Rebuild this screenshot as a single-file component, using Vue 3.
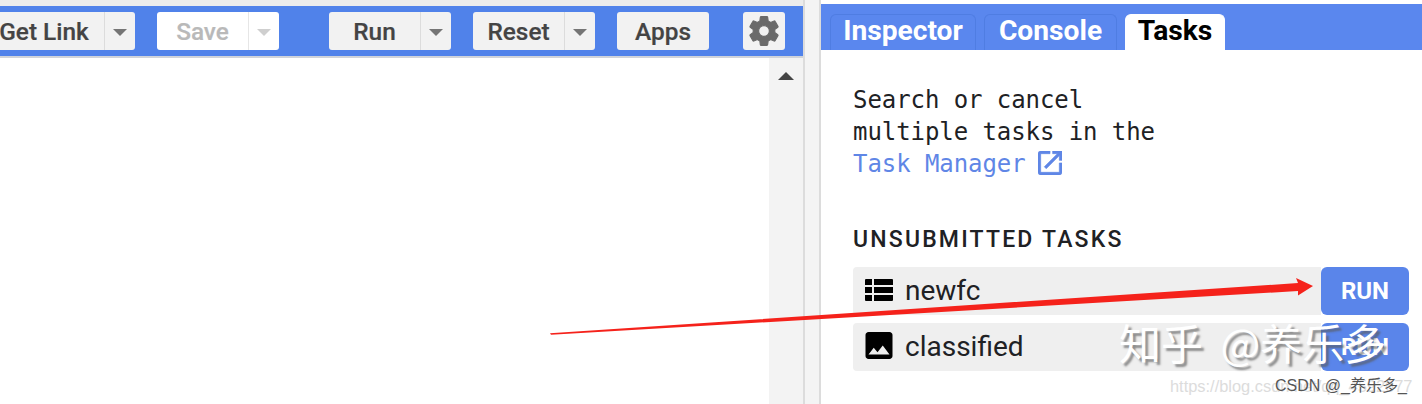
<template>
  <div class="page">
    <section class="editor">
      <div class="top-strip"></div>
      <div class="toolbar">
        <div class="split" v-for="b in buttons" :key="b.label" :class="b.cls">
          <button class="main" :style="{ width: b.w + 'px' }">{{ b.label }}</button>
          <button v-if="b.drop" class="drop"><span class="caret"></span></button>
        </div>
        <button class="gear" aria-label="Settings">
          <svg viewBox="0 0 24 24" width="36" height="36"><path fill="#6a6a6a" stroke="#6a6a6a" stroke-width="0.8" d="M19.14 12.94c.04-.3.06-.61.06-.94 0-.32-.02-.64-.07-.94l2.03-1.58c.18-.14.23-.41.12-.61l-1.92-3.32c-.12-.22-.37-.29-.59-.22l-2.39.96c-.5-.38-1.03-.7-1.62-.94l-.36-2.54c-.04-.24-.24-.41-.48-.41h-3.84c-.24 0-.43.17-.47.41l-.36 2.54c-.59.24-1.13.57-1.62.94l-2.39-.96c-.22-.08-.47 0-.59.22L2.74 8.87c-.12.21-.08.47.12.61l2.03 1.58c-.05.3-.09.63-.09.94s.02.64.07.94l-2.03 1.58c-.18.14-.23.41-.12.61l1.92 3.32c.12.22.37.29.59.22l2.39-.96c.5.38 1.03.7 1.62.94l.36 2.54c.05.24.24.41.48.41h3.84c.24 0 .44-.17.47-.41l.36-2.54c.59-.24 1.13-.56 1.62-.94l2.39.96c.22.08.47 0 .59-.22l1.92-3.32c.12-.22.07-.47-.12-.61l-2.01-1.58zM12 15.6c-1.98 0-3.6-1.62-3.6-3.6s1.62-3.6 3.6-3.6 3.6 1.62 3.6 3.6-1.62 3.6-3.6 3.6z" /></svg>
        </button>
      </div>
      <div class="canvas">
        <div class="blank"></div>
        <div class="scrollbar"><span class="up"></span></div>
      </div>
    </section>

    <div class="splitter"></div>

    <section class="side">
      <div class="tabs">
        <div v-for="t in tabs" :key="t.label" class="tab" :class="{ active: t.label === 'Tasks' }" :style="{ width: t.w + 'px' }">{{ t.label }}</div>
      </div>
      <div class="panel">
        <p class="intro">
          Search or cancel<br />multiple tasks in the<br />
          <span class="link">Task Manager
            <svg viewBox="3 3 18 18" width="24" height="24"><path fill="#5f86e6" stroke="#5f86e6" stroke-width="0.5" d="M19 19H5V5h7V3H5c-1.11 0-2 .9-2 2v14c0 1.1.89 2 2 2h14c1.1 0 2-.9 2-2v-7h-2v7zM14 3v2h3.59l-9.83 9.83 1.41 1.41L19 6.41V10h2V3h-7z" /></svg>
          </span>
        </p>
        <h2>UNSUBMITTED TASKS</h2>
        <div class="row">
          <div class="name">
            <svg class="ico" viewBox="0 0 28 22" width="28" height="22"><path d="M1 0h6v6H0V1a1 1 0 0 1 1-1zM9 0h18a1 1 0 0 1 1 1v5H9zM0 8h7v6H0zM9 8h19v6H9zM0 16h7v6H1a1 1 0 0 1-1-1zM9 16h19v5a1 1 0 0 1-1 1H9z" /></svg>
            <span>newfc</span>
          </div>
          <button class="run">RUN</button>
        </div>
        <div class="row">
          <div class="name">
            <svg class="ico" viewBox="3 3 18 18" width="28" height="27"><path d="M21 19V5c0-1.1-.9-2-2-2H5c-1.1 0-2 .9-2 2v14c0 1.1.9 2 2 2h14c1.1 0 2-.9 2-2zM8.5 13.5l2.5 3.01L14.5 12l4.5 6H5l3.5-4.5z" /></svg>
            <span>classified</span>
          </div>
          <button class="run">RUN</button>
        </div>
      </div>
    </section>

    <svg class="arrow" viewBox="0 0 1422 404" width="1422" height="404" aria-hidden="true">
      <path fill="#f5221b" d="M550 333.3 L1298 283 L1296 278 L1313 286 L1298 295.5 L1298 291 L551 334.8 Z" />
    </svg>
    <div class="mark">知乎 @养乐多</div>
    <div class="url">https://blog.csdn.net/qq_4592677</div>
    <div class="csdn">CSDN @_养乐多_</div>
  </div>
</template>

<script setup>
const buttons = [
  { label: 'Get Link', w: 120, drop: true },
  { label: 'Save', w: 91, drop: true, cls: 'disabled' },
  { label: 'Run', w: 91, drop: true, cls: 'wide-gap' },
  { label: 'Reset', w: 91, drop: true },
  { label: 'Apps', w: 92, drop: false }
]
const tabs = [
  { label: 'Inspector', w: 146 },
  { label: 'Console', w: 133 },
  { label: 'Tasks', w: 100 }
]
</script>

<style>
html, body { margin: 0; background: #fff; }
</style>

<style scoped>
.page {
  position: relative;
  display: flex;
  width: 1422px;
  height: 404px;
  overflow: hidden;
  background: #fff;
  font-family: Roboto, "Liberation Sans", sans-serif;
}
button { font-family: inherit; border: 0; padding: 0; margin: 0; }

.editor { width: 803px; display: flex; flex-direction: column; flex: none; }
.top-strip { height: 6px; background: #ececec; }
.toolbar {
  height: 50px;
  box-sizing: content-box;
  background: #5082ea;
  border-bottom: 2px solid #cfd3da;
  display: flex;
  justify-content: flex-end;
  align-items: center;
  gap: 22px;
  padding-right: 18px;
  overflow: hidden;
}
.split {
  display: flex;
  flex: none;
  height: 38px;
  border-radius: 3px;
  overflow: hidden;
  background: #f2f2f2;
}
.split.wide-gap { margin-left: 28px; }
.main {
  background: transparent;
  font-size: 24.4px;
  font-weight: 500;
  color: #444;
  height: 38px;
  -webkit-text-stroke: 0.2px #444;
}
.drop {
  width: 31px;
  box-sizing: border-box;
  border-left: 1px solid #dcdcdc;
  background: transparent;
  display: flex;
  align-items: center;
  justify-content: center;
  padding-top: 3px;
}
.caret {
  width: 0;
  height: 0;
  border-left: 7px solid transparent;
  border-right: 7px solid transparent;
  border-top: 7px solid #757575;
}
.disabled { background: #fff; }
.disabled .main { color: #b9b9b9; -webkit-text-stroke: 0.2px #b9b9b9; }
.disabled .drop { border-left-color: #e6e6e6; }
.disabled .caret { border-top-color: #cfcfcf; }
.gear {
  width: 42px;
  height: 38px;
  margin-left: 12px;
  background: #f2f2f2;
  border-radius: 3px;
  flex: none;
  display: flex;
  align-items: center;
  justify-content: center;
}
.canvas { flex: 1; display: flex; }
.blank { flex: 1; background: #fff; }
.scrollbar {
  width: 34px;
  background: #f3f3f3;
  display: flex;
  justify-content: center;
  padding-top: 14px;
  box-sizing: border-box;
}
.up {
  width: 0;
  height: 0;
  border-left: 8px solid transparent;
  border-right: 8px solid transparent;
  border-bottom: 8px solid #444;
}
.splitter {
  width: 18px;
  flex: none;
  box-sizing: border-box;
  background: #f4f4f4;
  border-left: 2px solid #dcdcdc;
  border-right: 2px solid #dcdcdc;
}

.side { flex: 1; display: flex; flex-direction: column; background: #fff; }
.tabs {
  margin-top: 4px;
  height: 46px;
  background: #5a87ee;
  display: flex;
  align-items: flex-end;
  gap: 8px;
  padding-left: 9px;
}
.tab {
  height: 36px;
  box-sizing: border-box;
  flex: none;
  text-align: center;
  border: 1px solid #4f7de2;
  border-bottom: 0;
  border-radius: 6px 6px 0 0;
  font-size: 28.2px;
  font-weight: 700;
  line-height: 32px;
  color: #fff;
}
.tab.active { background: #fff; color: #000; border-color: #fff; }
.panel { padding: 34px 13px 0 32px; }
.intro {
  margin: 0;
  font-family: "DejaVu Sans Mono", "Liberation Mono", monospace;
  font-size: 24px;
  letter-spacing: -0.07px;
  line-height: 32px;
  color: #202124;
}
.link { color: #5f86e6; }
.link svg { vertical-align: -3px; margin-left: -2px; }
h2 {
  margin: 46px 0 13px;
  font-size: 23px;
  line-height: 28px;
  font-weight: 500;
  letter-spacing: 2.2px;
  color: #202124;
}
.row { display: flex; height: 48px; margin-bottom: 8px; }
.name {
  flex: 1;
  background: #efefef;
  border-radius: 4px 0 0 4px;
  display: flex;
  align-items: center;
  padding-left: 12px;
  gap: 12px;
  font-size: 28px;
  color: #202124;
}
.name span { margin-top: -2px; }
.ico { fill: #000; margin-top: -3px; flex: none; }
.run {
  width: 88px;
  background: #5a85ea;
  color: #fff;
  border-radius: 6px;
  font-size: 24px;
  font-weight: 700;
}

.arrow { position: absolute; left: 0; top: 0; pointer-events: none; }
.mark {
  position: absolute;
  left: 1119px;
  top: 314px;
  font-family: "Noto Sans CJK SC", sans-serif;
  font-size: 42px;
  line-height: 56px;
  word-spacing: 8px;
  white-space: nowrap;
  color: #fff;
  text-shadow: 3px 3px 2px rgba(90, 90, 90, 0.65);
}
.url {
  position: absolute;
  left: 1170px;
  top: 376px;
  font-family: "Liberation Sans", sans-serif;
  font-size: 16.4px;
  line-height: 20px;
  color: #dcdcdc;
  white-space: nowrap;
}
.csdn {
  position: absolute;
  left: 1275px;
  top: 376px;
  font-family: "Liberation Sans", "Noto Sans CJK SC", sans-serif;
  font-size: 16px;
  line-height: 20px;
  color: #555;
  white-space: nowrap;
  text-shadow: 0 0 1px #fff;
}
</style>
